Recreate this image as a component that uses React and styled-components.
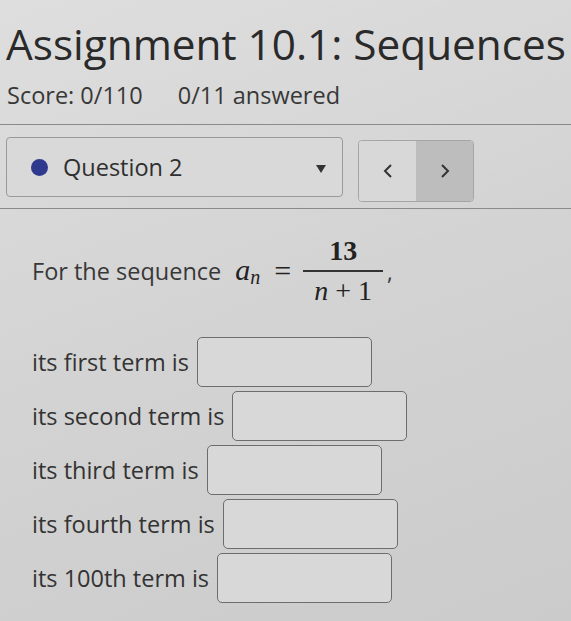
import React from 'react';
import styled, { createGlobalStyle } from 'styled-components';

const Global = createGlobalStyle`
  html, body {
    margin: 0;
    padding: 0;
  }
  body {
    background: linear-gradient(160deg, #dedede 0%, #d3d3d3 50%, #cbcbcb 100%);
    font-family: "Open Sans", "DejaVu Sans", sans-serif;
    color: #2f2f2f;
    width: 571px;
    height: 621px;
    overflow: hidden;
  }
`;

const Page = styled.div`
  padding: 14px 0 0 0;
`;

const Title = styled.h1`
  margin: 0 0 0 6px;
  font-size: 42.3px;
  font-weight: 400;
  line-height: 60px;
  color: #2a2a2a;
  white-space: nowrap;
`;

const Meta = styled.div`
  display: flex;
  gap: 35px;
  margin: 6px 0 0 7px;
  font-size: 23.5px;
  line-height: 30px;
  color: #383838;
`;

const Rule = styled.hr`
  margin: ${p => p.$top || 0}px 0 0 0;
  border: none;
  border-top: 1.5px solid #8a8a8a;
`;

const NavRow = styled.div`
  display: flex;
  align-items: flex-start;
  gap: 15px;
  padding: 12px 0 0 6px;
`;

const Select = styled.div`
  display: flex;
  align-items: center;
  width: 337px;
  height: 60px;
  box-sizing: border-box;
  border: 1px solid #9a9a9a;
  border-radius: 4px;
  background: #d9d9d9;
  padding: 0 14px 0 24px;
  font-size: 23.5px;
`;

const Dot = styled.span`
  width: 17px;
  height: 17px;
  border-radius: 50%;
  background: #2f3a8f;
  margin-right: 15px;
`;

const Caret = styled.span`
  margin-left: auto;
  margin-right: 2px;
  margin-top: 4px;
  width: 0;
  height: 0;
  border-left: 5px solid transparent;
  border-right: 5px solid transparent;
  border-top: 8px solid #333;
`;

const Pager = styled.div`
  display: flex;
  height: 60px;
  border: 1px solid #a5a5a5;
  border-radius: 4px;
  overflow: hidden;
  margin-top: 3px;
`;

const PageBtn = styled.div`
  width: 57px;
  display: flex;
  align-items: center;
  justify-content: center;
  background: ${p => (p.$dark ? '#bdbdbd' : '#d8d8d8')};
`;

const Body = styled.div`
  padding: 22px 0 0 32px;
`;

const Prompt = styled.div`
  display: flex;
  align-items: center;
  font-size: 23.5px;
  color: #383838;
  height: 80px;
`;

const MathVar = styled.span`
  font-family: "Liberation Serif", "DejaVu Serif", serif;
  font-style: italic;
  font-size: 30px;
  margin-left: 14px;
  color: #222;
  sub {
    font-size: 20px;
    vertical-align: -4px;
  }
`;

const Eq = styled.span`
  font-family: "Liberation Serif", serif;
  font-size: 30px;
  margin: 0 12px 0 14px;
  color: #222;
`;

const Frac = styled.span`
  display: inline-flex;
  flex-direction: column;
  align-items: center;
  font-family: "Liberation Serif", "DejaVu Serif", serif;
  font-size: 28px;
  line-height: 30px;
  color: #222;
`;

const Num = styled.span`
  font-weight: 700;
  padding: 0 4px 4px;
`;

const Den = styled.span`
  border-top: 2px solid #333;
  padding: 4px 11px 0;
  i {
    font-style: italic;
  }
`;

const Comma = styled.span`
  font-size: 22px;
  margin-left: 4px;
  align-self: center;
`;

const Rows = styled.div`
  display: flex;
  flex-direction: column;
  gap: 4px;
  margin-top: 26px;
`;

const Row = styled.div`
  display: flex;
  align-items: center;
  gap: 8px;
  font-size: 23.5px;
  color: #333;
`;

const Box = styled.div`
  width: 175px;
  height: 50px;
  box-sizing: border-box;
  border: 1.5px solid #6d6d6d;
  border-radius: 5px;
  background: #d8d8d8;
`;

const Chevron = ({ dir }) => (
  <svg width="12" height="18" viewBox="0 0 12 18" fill="none" stroke="#333" strokeWidth="2">
    <path d={dir === 'left' ? 'M9 3 L3 9 L9 15' : 'M3 3 L9 9 L3 15'} />
  </svg>
);

const terms = ['first', 'second', 'third', 'fourth', '100th'];

export default function App() {
  return (
    <>
      <Global />
      <Page>
        <Title>Assignment 10.1: Sequences</Title>
        <Meta>
          <span>Score: 0/110</span>
          <span>0/11 answered</span>
        </Meta>
        <Rule $top={14} />
        <NavRow>
          <Select>
            <Dot />
            Question 2
            <Caret />
          </Select>
          <Pager>
            <PageBtn><Chevron dir="left" /></PageBtn>
            <PageBtn $dark><Chevron dir="right" /></PageBtn>
          </Pager>
        </NavRow>
        <Rule $top={6} />
        <Body>
          <Prompt>
            For the sequence
            <MathVar>a<sub>n</sub></MathVar>
            <Eq>=</Eq>
            <Frac>
              <Num>13</Num>
              <Den><i>n</i> + 1</Den>
            </Frac>
            <Comma>,</Comma>
          </Prompt>
          <Rows>
            {terms.map(t => (
              <Row key={t}>
                its {t} term is
                <Box />
              </Row>
            ))}
          </Rows>
        </Body>
      </Page>
    </>
  );
}
